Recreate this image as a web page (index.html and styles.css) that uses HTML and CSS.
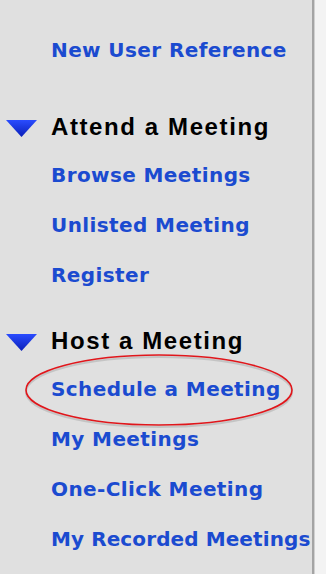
FILE: index.html
```html
<!DOCTYPE html>
<html>
<head>
<meta charset="utf-8">
<link rel="stylesheet" href="styles.css">
</head>
<body>
<div class="frame">
  <nav class="panel">
    <a class="link first" href="#">New User Reference</a>

    <div class="heading">
      <svg class="tri" width="31" height="17" viewBox="0 0 31 17">
        <defs>
          <linearGradient id="g1" x1="0" y1="0" x2="0" y2="1">
            <stop offset="0" stop-color="#2a4cff"/>
            <stop offset="1" stop-color="#0a1fb8"/>
          </linearGradient>
        </defs>
        <polygon points="0,0 31,0 15.5,17" fill="url(#g1)"/>
      </svg>
      <span>Attend a Meeting</span>
    </div>
    <a class="link" href="#">Browse Meetings</a>
    <a class="link" href="#">Unlisted Meeting</a>
    <a class="link" href="#">Register</a>

    <div class="heading second">
      <svg class="tri" width="31" height="17" viewBox="0 0 31 17">
        <defs>
          <linearGradient id="g2" x1="0" y1="0" x2="0" y2="1">
            <stop offset="0" stop-color="#2a4cff"/>
            <stop offset="1" stop-color="#0a1fb8"/>
          </linearGradient>
        </defs>
        <polygon points="0,0 31,0 15.5,17" fill="url(#g2)"/>
      </svg>
      <span>Host a Meeting</span>
    </div>
    <div class="circled">
      <a class="link" href="#">Schedule a Meeting</a>
      <svg class="ring" width="272" height="76" viewBox="0 0 272 76">
        <ellipse cx="136" cy="39" rx="133" ry="35" fill="none" stroke="rgba(0,0,0,0.12)" stroke-width="2"/>
        <ellipse cx="136" cy="37" rx="133" ry="35" fill="none" stroke="#e0161b" stroke-width="1.6"/>
      </svg>
    </div>
    <a class="link" href="#">My Meetings</a>
    <a class="link" href="#">One-Click Meeting</a>
    <a class="link tight" href="#">My Recorded Meetings</a>
  </nav>
</div>
</body>
</html>
```

FILE: styles.css
```css
html, body {
  margin: 0;
  padding: 0;
  background: #f3f3f3;
}

.frame {
  display: flex;
  width: 326px;
  height: 574px;
  overflow: hidden;
}

.panel {
  display: flex;
  flex-direction: column;
  width: 314px;
  height: 574px;
  box-sizing: border-box;
  padding-top: 25px;
  background: #e0e0e0;
  border-right: 2px solid #a4a4a4;
  box-shadow: 1px 0 0 #d0d0d0;
}

.link {
  display: block;
  padding-left: 51px;
  height: 50px;
  line-height: 50px;
  font-family: "DejaVu Sans", Verdana, sans-serif;
  font-weight: bold;
  font-size: 20px;
  letter-spacing: 0.4px;
  color: #1b4bd0;
  text-decoration: none;
  white-space: nowrap;
}

.link.tight {
  letter-spacing: 0.1px;
}

.heading {
  display: flex;
  align-items: center;
  gap: 14px;
  padding-left: 6px;
  margin-top: 29px;
  height: 46px;
  font-family: "Liberation Sans", Arial, sans-serif;
  font-weight: bold;
  font-size: 24px;
  letter-spacing: 1.6px;
  color: #000;
  white-space: nowrap;
}

.heading.second {
  margin-top: 18px;
}

.tri {
  flex: none;
  margin-top: 3px;
}

.circled {
  position: relative;
}

.ring {
  position: absolute;
  left: 23px;
  top: -11px;
  pointer-events: none;
}
```
